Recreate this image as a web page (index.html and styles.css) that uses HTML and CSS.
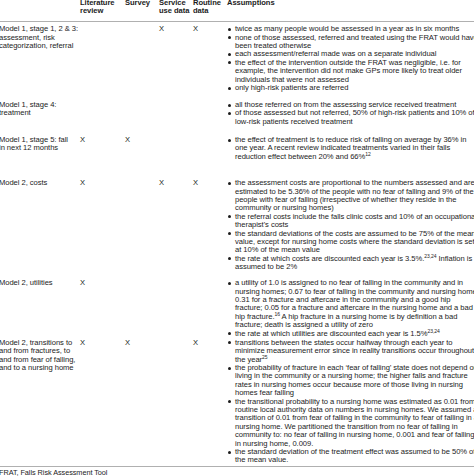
FILE: index.html
```html
<!DOCTYPE html>
<html lang="en">
<head>
<meta charset="utf-8">
<title>FRAT model assumptions</title>
<link rel="stylesheet" href="styles.css">
</head>
<body>
<div class="sheet">
<table class="frat">
  <colgroup>
    <col class="w-label"><col class="w-lit"><col class="w-src"><col class="w-src"><col class="w-src"><col class="w-assume">
  </colgroup>
  <thead>
    <tr>
      <th></th>
      <th>Literature review</th>
      <th>Survey</th>
      <th>Service use data</th>
      <th>Routine data</th>
      <th>Assumptions</th>
    </tr>
  </thead>
  <tbody>
    <tr class="row-first">
      <td>Model 1, stage 1, 2 &amp; 3:<br>assessment, risk<br>categorization, referral</td>
      <td></td><td></td><td>X</td><td>X</td>
      <td><ul>
        <li>twice as many people would be assessed in a year as in six months</li>
        <li>none of those assessed, referred and treated using the FRAT would have<br>been treated otherwise</li>
        <li>each assessment/referral made was on a separate individual</li>
        <li>the effect of the intervention outside the FRAT was negligible, i.e. for<br>example, the intervention did not make GPs more likely to treat older<br>individuals that were not assessed</li>
        <li>only high-risk patients are referred</li>
      </ul></td>
    </tr>
    <tr class="row-mid">
      <td>Model 1, stage 4:<br>treatment</td>
      <td></td><td></td><td></td><td></td>
      <td><ul>
        <li>all those referred on from the assessing service received treatment</li>
        <li>of those assessed but not referred, 50% of high-risk patients and 10% of<br>low-risk patients received treatment</li>
      </ul></td>
    </tr>
    <tr class="row-loose">
      <td>Model 1, stage 5: fall<br>in next 12 months</td>
      <td>X</td><td>X</td><td></td><td></td>
      <td><ul>
        <li>the effect of treatment is to reduce risk of falling on average by 36% in<br>one year. A recent review indicated treatments varied in their falls<br>reduction effect between 20% and 66%<sup>12</sup></li>
      </ul></td>
    </tr>
    <tr class="row-snug">
      <td>Model 2, costs</td>
      <td>X</td><td></td><td>X</td><td>X</td>
      <td><ul>
        <li>the assessment costs are proportional to the numbers assessed and are<br>estimated to be 5.36% of the people with no fear of falling and 9% of the<br>people with fear of falling (irrespective of whether they reside in the<br>community or nursing homes)</li>
        <li>the referral costs include the falls clinic costs and 10% of an occupational<br>therapist's costs</li>
        <li>the standard deviations of the costs are assumed to be 75% of the mean<br>value, except for nursing home costs where the standard deviation is set<br>at 10% of the mean value</li>
        <li>the rate at which costs are discounted each year is 3.5%.<sup>23,24</sup> Inflation is<br>assumed to be 2%</li>
      </ul></td>
    </tr>
    <tr class="row-tight">
      <td>Model 2, utilities</td>
      <td>X</td><td></td><td></td><td></td>
      <td><ul>
        <li>a utility of 1.0 is assigned to no fear of falling in the community and in<br>nursing homes; 0.67 to fear of falling in the community and nursing home;<br>0.31 for a fracture and aftercare in the community and a good hip<br>fracture; 0.05 for a fracture and aftercare in the nursing home and a bad<br>hip fracture.<sup>16</sup> A hip fracture in a nursing home is by definition a bad<br>fracture; death is assigned a utility of zero</li>
        <li>the rate at which utilities are discounted each year is 1.5%<sup>23,24</sup></li>
      </ul></td>
    </tr>
    <tr class="row-last">
      <td>Model 2, transitions to<br>and from fractures, to<br>and from fear of falling,<br>and to a nursing home</td>
      <td>X</td><td>X</td><td></td><td>X</td>
      <td><ul>
        <li>transitions between the states occur halfway through each year to<br>minimize measurement error since in reality transitions occur throughout<br>the year<sup>25</sup></li>
        <li>the probability of fracture in each ‘fear of falling’ state does not depend on<br>living in the community or a nursing home; the higher falls and fracture<br>rates in nursing homes occur because more of those living in nursing<br>homes fear falling</li>
        <li>the transitional probability to a nursing home was estimated as 0.01 from<br>routine local authority data on numbers in nursing homes. We assumed a<br>transition of 0.01 from fear of falling in the community to fear of falling in a<br>nursing home. We partitioned the transition from no fear of falling in<br>community to: no fear of falling in nursing home, 0.001 and fear of falling<br>in nursing home, 0.009.</li>
        <li>the standard deviation of the treatment effect was assumed to be 50% of<br>the mean value.</li>
      </ul></td>
    </tr>
  </tbody>
</table>
<p class="note">FRAT, Falls Risk Assessment Tool</p>
</div>
</body>
</html>
```

FILE: styles.css
```css
html, body {
  margin: 0;
  padding: 0;
  overflow: hidden;
  background: #ffffff;
}

.sheet {
  margin: -1px 0 0 -1px;
  width: 500px;
  font-family: "Liberation Sans", Arial, sans-serif;
  font-size: 7.6px;
  line-height: 8.4px;
  letter-spacing: -0.05px;
  color: #1c1c1c;
}

.frat {
  border-collapse: collapse;
  table-layout: fixed;
  width: 490px;
  border-bottom: 1px solid #b0b0b0;
}

.w-label { width: 81px; }
.w-lit { width: 45px; }
.w-src { width: 34px; }
.w-assume { width: 262px; }

.frat th {
  text-align: left;
  vertical-align: top;
  font-weight: bold;
  padding: 0 0 5px 0;
}

.frat thead tr {
  border-bottom: 1px solid #b0b0b0;
}

.frat td {
  vertical-align: top;
  white-space: nowrap;
  padding: 0 0 8.5px 0;
}

.frat .row-first td { padding-top: 3.3px; }
.frat .row-mid td { padding-bottom: 10px; }
.frat .row-loose td { padding-bottom: 17.8px; }
.frat .row-snug td { padding-bottom: 7.6px; }
.frat .row-tight td { padding-bottom: 0.7px; }
.frat .row-last td { padding-bottom: 1px; }

.frat ul {
  list-style: none;
  margin: 0;
  padding: 0;
}

.frat li {
  position: relative;
  padding-left: 8px;
}

.frat li::before {
  content: "";
  position: absolute;
  left: 1px;
  top: 2.7px;
  width: 3px;
  height: 3px;
  border-radius: 50%;
  background: #1c1c1c;
}

.frat sup {
  font-size: 5px;
  line-height: 0;
  vertical-align: 2.6px;
}

.note {
  margin: 2px 0 0 0;
  font-size: 7.3px;
}
```
